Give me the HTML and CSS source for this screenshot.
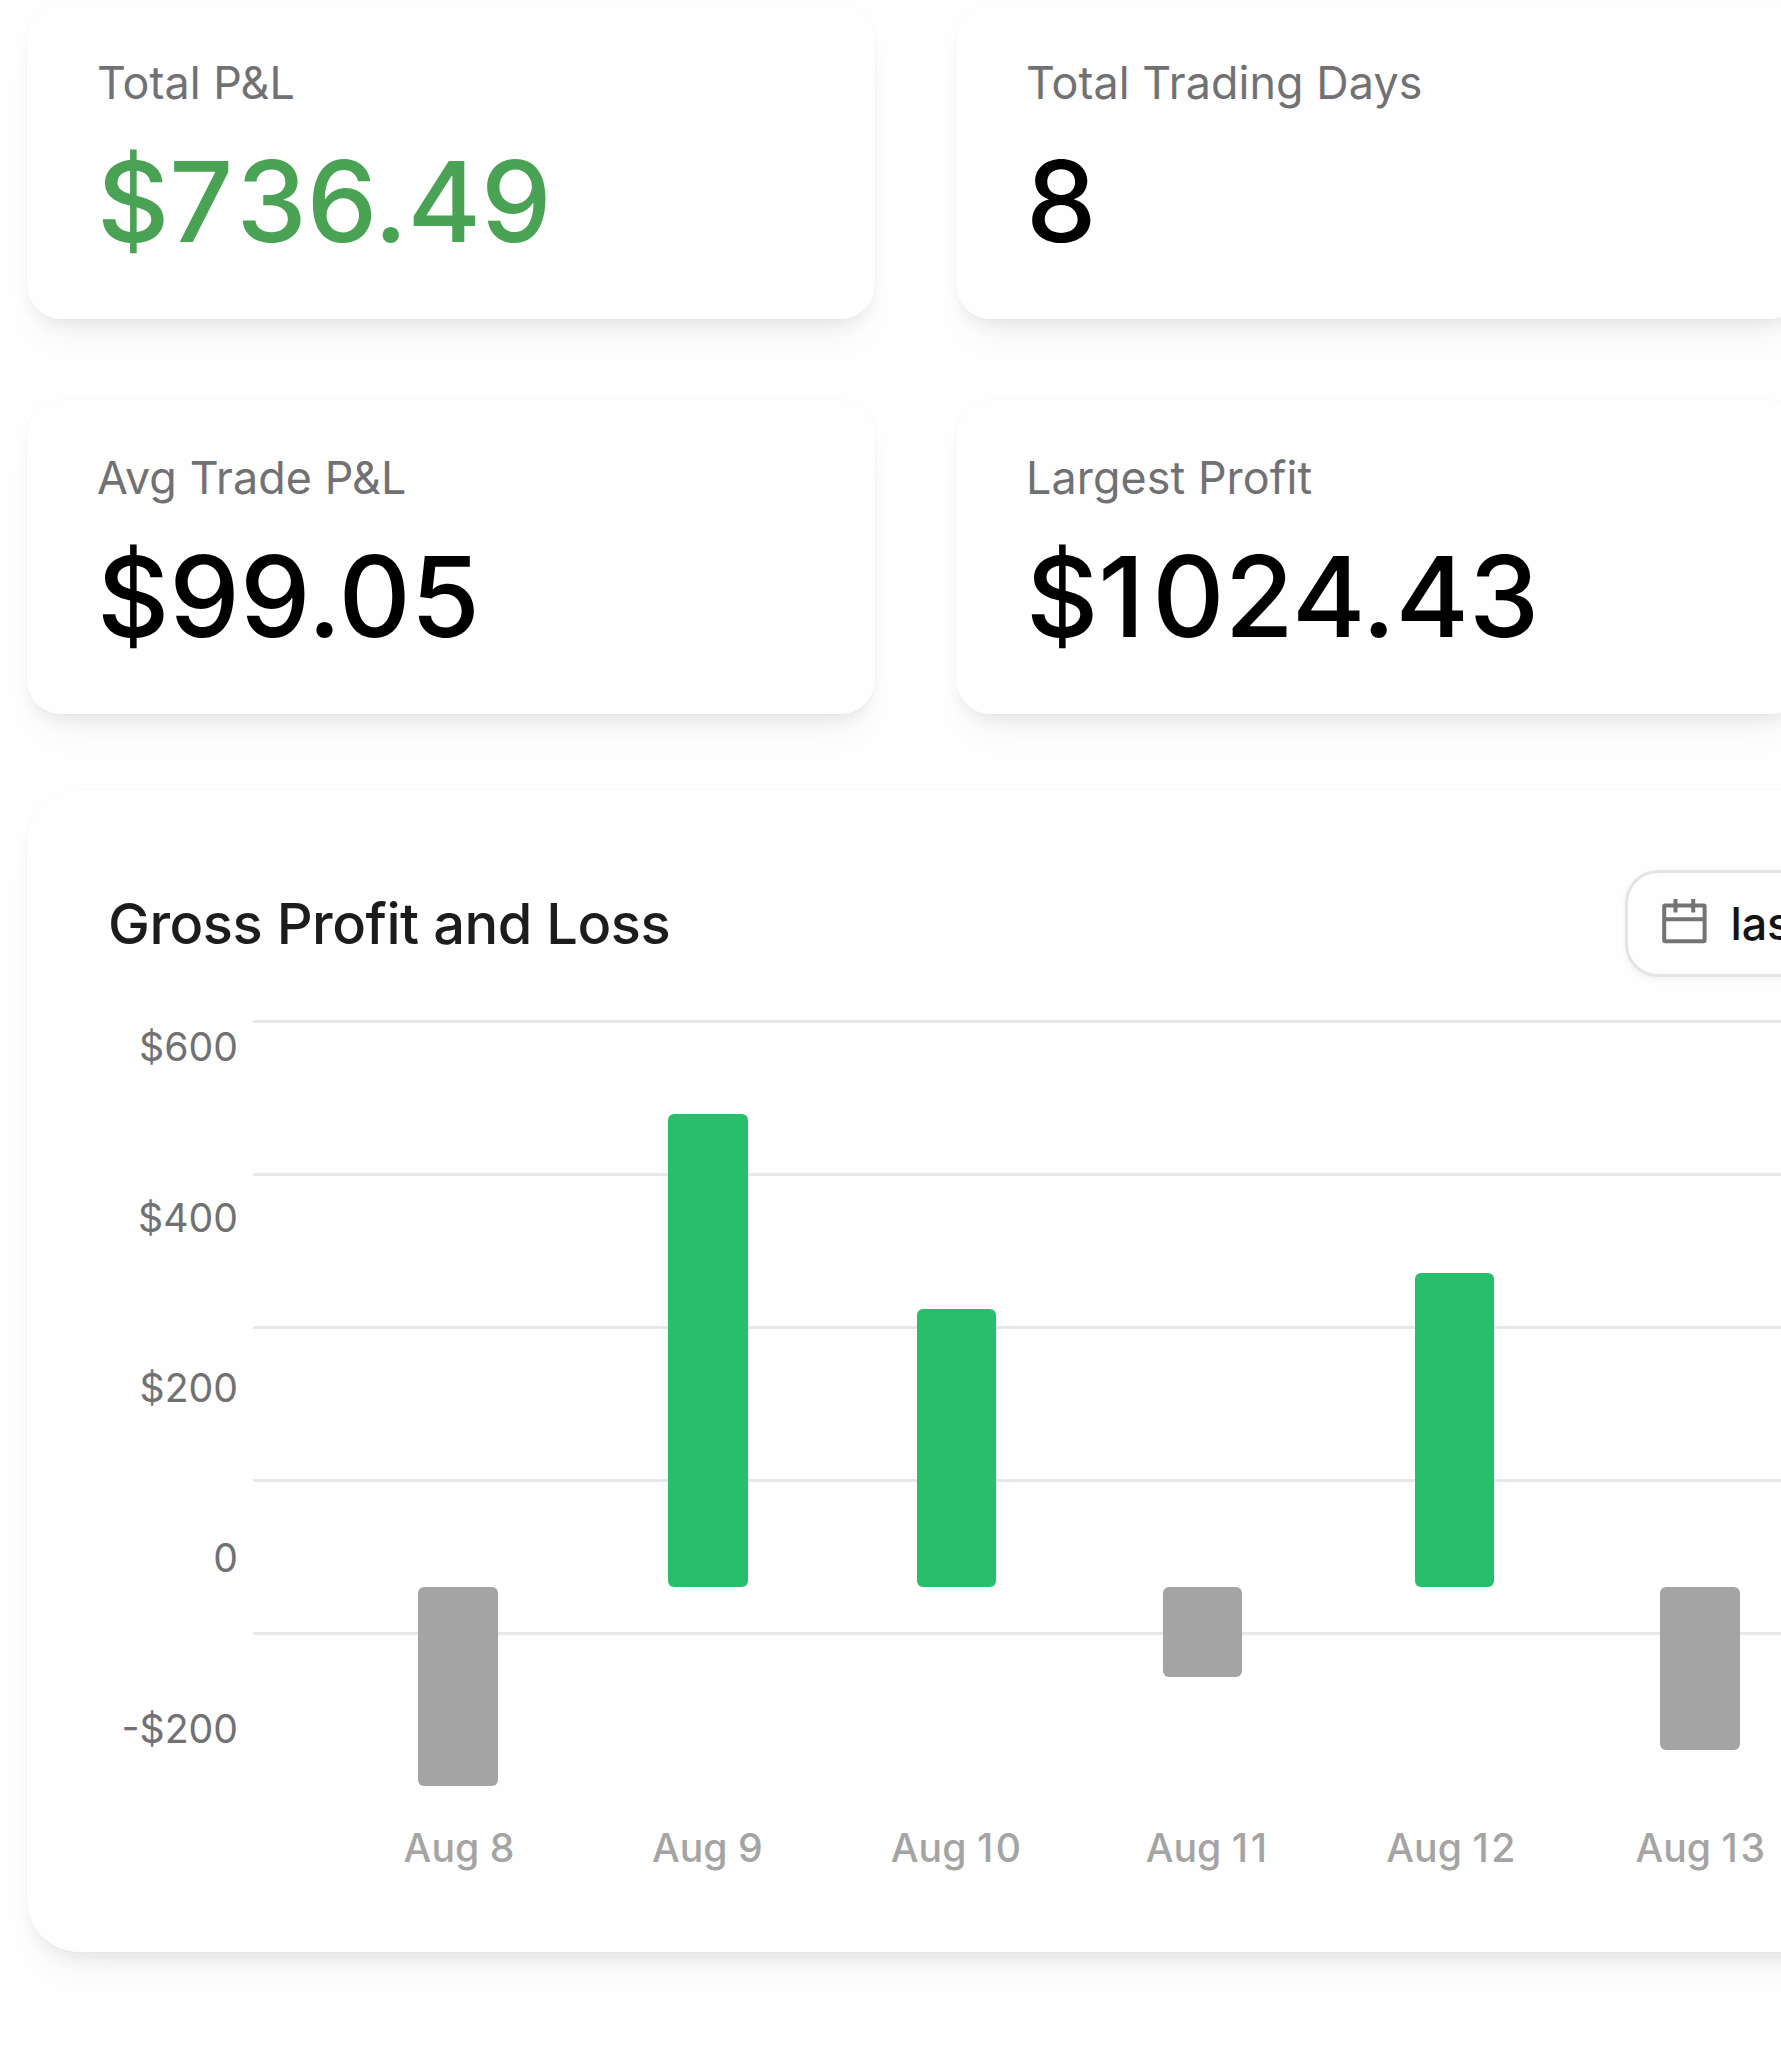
FILE: index.html
```html
<!DOCTYPE html>
<html lang="en">
<head>
<meta charset="utf-8">
<title>Trading dashboard</title>
<link rel="stylesheet" href="styles.css">
</head>
<body>
<main class="dashboard">
  <section class="stats">
    <article class="card stat">
      <div class="stat-label">Total P&amp;L</div>
      <div class="stat-value positive">$<span class="seven">7</span>36.49</div>
    </article>
    <article class="card stat">
      <div class="stat-label">Total Trading Days</div>
      <div class="stat-value">8</div>
    </article>
    <article class="card stat">
      <div class="stat-label">Avg Trade P&amp;L</div>
      <div class="stat-value">$99.05</div>
    </article>
    <article class="card stat">
      <div class="stat-label">Largest Profit</div>
      <div class="stat-value">$<span class="one">1</span>024.43</div>
    </article>
  </section>

  <section class="card panel">
    <header class="panel-head">
      <h2 class="panel-title">Gross Profit and Loss</h2>
      <button class="range">
        <svg class="range-icon" viewBox="0 0 45 45" fill="none" stroke="currentColor" stroke-width="4">
          <rect x="2.2" y="6.6" width="40.4" height="35.6" rx="1"/>
          <path d="M2 20.3H43M13.5 0V13.4M31.2 0V13.4"/>
        </svg>
        <span class="range-text">last</span>
      </button>
    </header>
    <div class="chart">
      <div class="y-axis">
        <span>$600</span><span>$400</span><span>$200</span><span>0</span><span>-$200</span>
      </div>
      <div class="plot">
        <div class="lines"><i></i><i></i><i></i><i></i><i></i></div>
        <div class="bars">
          <div class="bar loss" style="margin-top:567px;height:198.7px"></div>
          <div class="bar gain" style="margin-top:93.7px;height:473.3px"></div>
          <div class="bar gain" style="margin-top:289.2px;height:277.8px"></div>
          <div class="bar loss" style="margin-top:567px;height:89.3px"></div>
          <div class="bar gain" style="margin-top:252.7px;height:314.3px"></div>
          <div class="bar loss" style="margin-top:567px;height:162.4px"></div>
        </div>
      </div>
      <div class="x-axis">
        <div>Aug 8</div>
        <div>Aug 9</div>
        <div>Aug <span class="one">1</span>0</div>
        <div>Aug <span class="one">1</span>1</div>
        <div>Aug <span class="one">1</span>2</div>
        <div>Aug <span class="one">1</span>3</div>
      </div>
    </div>
  </section>
</main>
</body>
</html>
```
FILE: styles.css
```css
* { box-sizing: border-box; }

body {
  margin: 0;
  width: 1781px;
  height: 2048px;
  overflow: hidden;
  background: #fefefe;
  font-family: Inter, "Liberation Sans", sans-serif;
}

.dashboard {
  width: 1837px;
  margin-left: 27px;
  padding-top: 5px;
}

.card {
  background: #fefefe;
  box-shadow:
    0 0 0 1px rgba(0, 0, 0, .014),
    0 28px 38px -15px rgba(0, 0, 0, .055),
    0 10px 16px -4px rgba(0, 0, 0, .06);
}

.stats {
  display: grid;
  grid-template-columns: 848px 848px;
  grid-auto-rows: 313.5px;
  gap: 81.5px 81px;
}

.stat {
  border-radius: 34px;
  padding: 45.7px 70px 0;
}

.stat-label {
  font-size: 44.8px;
  line-height: 64px;
  letter-spacing: .1px;
  color: #717174;
}

.stat-value {
  margin-top: 19.6px;
  font-size: 112px;
  line-height: 134px;
  font-weight: 500;
  color: #000;
}

.seven { letter-spacing: .028em; }
.one { letter-spacing: .067em; }

.positive { color: #4aa254; }

.panel {
  height: 1161.7px;
  margin-top: 76.5px;
  padding: 80px 60px 0 80px;
  border-radius: 52px;
}

.panel-head {
  display: flex;
  align-items: center;
  justify-content: space-between;
  height: 106.7px;
}

.panel-title {
  margin: 0;
  padding: 2px 0 0 1px;
  font-size: 56px;
  line-height: 68px;
  font-weight: 500;
  letter-spacing: -.48px;
  color: #1c1c1c;
}

.range {
  display: flex;
  align-items: center;
  flex: none;
  gap: 23px;
  width: 179px;
  height: 106.7px;
  padding: 0 0 0 34.4px;
  border: 3px solid #e3e4e4;
  border-right: 0;
  border-radius: 33px 0 0 33px;
  background: #fefefe;
  box-shadow: 0 3px 6px rgba(0, 0, 0, .05);
  font: 500 44.8px/54px Inter, "Liberation Sans", sans-serif;
  color: #141414;
  white-space: nowrap;
}

.range-text { padding-top: 1px; }

.range-icon {
  flex: none;
  width: 45px;
  height: 45px;
  margin-top: -4px;
  color: #747477;
}

.chart {
  display: grid;
  grid-template-columns: 131px 1fr;
  grid-template-rows: 765.7px auto;
  column-gap: 15px;
  margin-top: 43.6px;
}

.y-axis {
  display: flex;
  flex-direction: column;
  gap: 122.4px;
  padding-top: 2.9px;
  text-align: right;
  font-size: 39.2px;
  line-height: 48px;
  color: #717174;
}

.plot { display: grid; }

.lines,
.bars { grid-area: 1 / 1; }

.lines {
  display: flex;
  flex-direction: column;
  gap: 150px;
}

.lines i {
  height: 3px;
  background: #e8e8e8;
}

.bars {
  display: grid;
  grid-template-columns: 250.2px 248.3px 245.9px 252px 245.6px 120px;
  align-items: start;
  padding-left: 165.3px;
}

.bar {
  width: 79.5px;
  border-radius: 6px;
}

.gain { background: #27be6c; }
.loss { background: #a4a4a4; }

.x-axis {
  grid-column: 2;
  display: grid;
  grid-template-columns: 248.3px 248.7px 250.3px 244.6px 249.4px 140px;
  padding: 37.6px 0 0 136px;
  font-size: 39.2px;
  line-height: 48px;
  font-weight: 500;
  color: #a4a4a4;
}

.x-axis div {
  width: 140px;
  text-align: center;
  white-space: nowrap;
}
```
